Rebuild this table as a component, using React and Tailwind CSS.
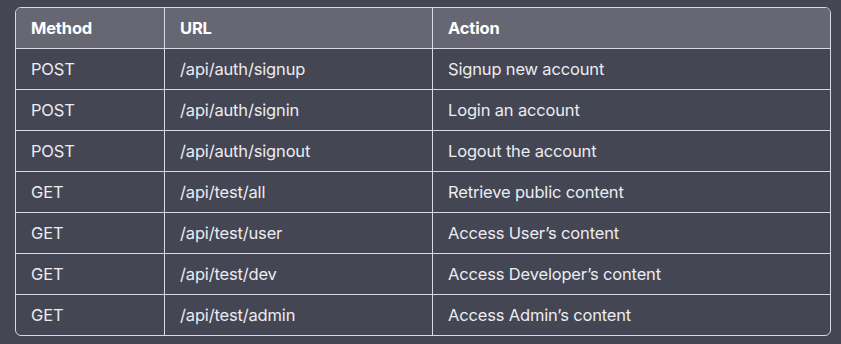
const rows = [
  ['POST', '/api/auth/signup', 'Signup new account'],
  ['POST', '/api/auth/signin', 'Login an account'],
  ['POST', '/api/auth/signout', 'Logout the account'],
  ['GET', '/api/test/all', 'Retrieve public content'],
  ['GET', '/api/test/user', 'Access User’s content'],
  ['GET', '/api/test/dev', 'Access Developer’s content'],
  ['GET', '/api/test/admin', 'Access Admin’s content'],
]

const Cell = ({ children, last, bottom, head }) => (
  <div
    className={`flex h-[40px] items-center px-[15px] pt-[1px] ${last ? '' : 'border-r border-[#d9d9e3]'} ${bottom ? 'border-b border-[#d9d9e3] h-[41px]' : ''} ${head ? 'font-bold text-white' : ''}`}
  >
    {children}
  </div>
)

export default function App() {
  return (
    <div className="min-h-[344px] w-[841px] bg-[#444654] pt-[7px] pl-[15px] font-['Inter','Liberation_Sans',sans-serif] text-[16.5px] tracking-[-0.01em] text-[#ececf1]">
      <div className="w-[816px] overflow-hidden rounded-md border border-[#d9d9e3]">
        <div className="grid grid-cols-[149px_268px_1fr] bg-[#666773]">
          <Cell head bottom>Method</Cell>
          <Cell head bottom>URL</Cell>
          <Cell head bottom last>Action</Cell>
        </div>
        {rows.map((r, i) => {
          const bottom = i < rows.length - 1
          return (
            <div key={i} className="grid grid-cols-[149px_268px_1fr]">
              <Cell bottom={bottom}>{r[0]}</Cell>
              <Cell bottom={bottom}>{r[1]}</Cell>
              <Cell bottom={bottom} last>{r[2]}</Cell>
            </div>
          )
        })}
      </div>
    </div>
  )
}
